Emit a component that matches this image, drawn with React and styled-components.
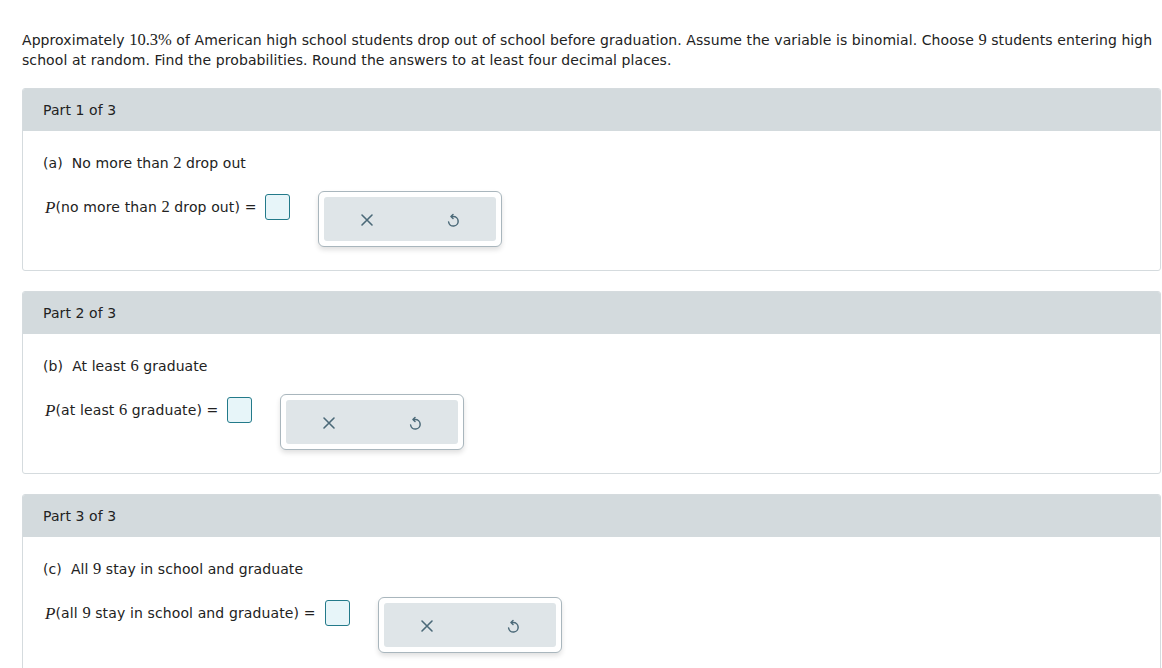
import React from "react";
import styled, { createGlobalStyle } from "styled-components";

const GlobalStyle = createGlobalStyle`
  body {
    margin: 0;
    background: #ffffff;
    font-family: "DejaVu Sans", Verdana, sans-serif;
    font-size: 14px;
    letter-spacing: 0.08px;
    color: #222;
  }
`;

const Page = styled.div`
  padding: 30px 1px 0 22px;
`;

const Intro = styled.p`
  margin: 0 0 18px 0;
  line-height: 20px;
`;

const Num = styled.span`
  font-family: "Liberation Serif", "DejaVu Serif", serif;
  font-size: 16.5px;
  line-height: 1;
  letter-spacing: 0;
`;

const Var = styled.span`
  font-family: "Liberation Serif", "DejaVu Serif", serif;
  font-style: italic;
  font-size: 17px;
  line-height: 1;
`;

const PartBox = styled.section`
  border: 1px solid #d5dbde;
  border-radius: 3px;
  margin-bottom: 20px;
  overflow: hidden;
`;

const PartHeader = styled.div`
  background: #d3dadd;
  height: 42px;
  display: flex;
  align-items: center;
  padding-left: 20px;
`;

const PartBody = styled.div`
  padding: 22px 20px 23px 20px;
`;

const Question = styled.div`
  line-height: 20px;
  margin-bottom: 19px;
`;

const AnswerRow = styled.div`
  display: flex;
  align-items: flex-start;
  padding-left: 2px;
`;

const Expr = styled.div`
  display: flex;
  align-items: center;
  height: 26px;
  margin-top: 2px;
  white-space: pre;
  letter-spacing: 0.12px;
`;

const Input = styled.div`
  width: 23px;
  height: 24px;
  border: 1px solid #237a8a;
  border-radius: 3px;
  background: #e7f5f9;
  margin-left: 9px;
`;

const ToolGroup = styled.div`
  margin-left: 28px;
  margin-top: -1px;
  padding: 5px;
  border: 1px solid #a9b6bd;
  border-radius: 6px;
  background: #fff;
  box-shadow: 0 3px 5px rgba(0, 0, 0, 0.12);
  display: flex;
`;

const ToolInner = styled.div`
  display: flex;
  background: #dfe5e8;
  border-radius: 3px;
`;

const ToolButton = styled.button`
  width: 86px;
  height: 44px;
  border: none;
  background: transparent;
  display: flex;
  align-items: center;
  justify-content: center;
  padding: 0;
  padding-top: 2px;
  color: #4b6978;
  cursor: pointer;
`;

const ClearIcon = () => (
  <svg width="14" height="14" viewBox="0 0 14 14" fill="none" stroke="currentColor" strokeWidth="1.6" strokeLinecap="round">
    <path d="M2 2 L12 12 M12 2 L2 12" />
  </svg>
);

const UndoIcon = () => (
  <svg width="14" height="15" viewBox="0 0 14 15" fill="none" stroke="currentColor" strokeWidth="1.5" strokeLinecap="round" strokeLinejoin="round">
    <path d="M5.5 3.5 H7.2 A4.8 4.8 0 1 1 2.6 9" />
    <path d="M7 1.5 L5 3.5 L7 5.5" />
  </svg>
);

const parts = [
  {
    n: 1,
    label: "(a)",
    question: <>No more than <Num>2</Num> drop out</>,
    expr: <>(no more than <Num>2</Num> drop out) =</>,
  },
  {
    n: 2,
    label: "(b)",
    question: <>At least <Num>6</Num> graduate</>,
    expr: <>(at least <Num>6</Num> graduate) =</>,
  },
  {
    n: 3,
    label: "(c)",
    question: <>All <Num>9</Num> stay in school and graduate</>,
    expr: <>(all <Num>9</Num> stay in school and graduate) =</>,
  },
];

const App = () => {
  return (
    <Page>
      <GlobalStyle />
      <Intro>
        Approximately <Num>10.3%</Num> of American high school students drop out of school before
        graduation. Assume the variable is binomial. Choose <Num>9</Num> students entering high school at
        random. Find the probabilities. Round the answers to at least four decimal places.
      </Intro>
      {parts.map((p) => (
        <PartBox key={p.n}>
          <PartHeader>Part {p.n} of 3</PartHeader>
          <PartBody>
            <Question>
              {p.label}&nbsp; {p.question}
            </Question>
            <AnswerRow>
              <Expr>
                <Var>P</Var>
                {p.expr}
                <Input />
              </Expr>
              <ToolGroup>
                <ToolInner>
                  <ToolButton aria-label="clear">
                    <ClearIcon />
                  </ToolButton>
                  <ToolButton aria-label="undo">
                    <UndoIcon />
                  </ToolButton>
                </ToolInner>
              </ToolGroup>
            </AnswerRow>
          </PartBody>
        </PartBox>
      ))}
    </Page>
  );
};

export default App;
